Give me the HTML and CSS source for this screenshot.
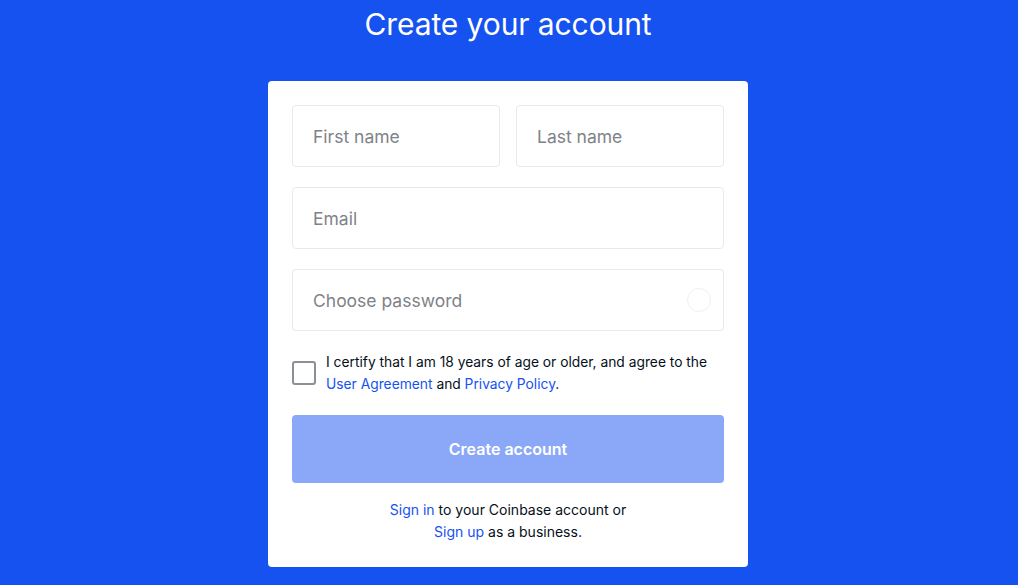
FILE: index.html
```html
<!DOCTYPE html>
<html>
<head>
<meta charset="utf-8">
<link rel="stylesheet" href="styles.css">
</head>
<body>
<main class="page">
  <h1 class="title">Create your account</h1>
  <form class="card">
    <div class="row">
      <div class="field"><span class="ph">First name</span></div>
      <div class="field"><span class="ph">Last name</span></div>
    </div>
    <div class="field"><span class="ph">Email</span></div>
    <div class="field password"><span class="ph">Choose password</span><span class="ring"></span></div>
    <label class="agree">
      <span class="box"></span>
      <span class="agree-text">I certify that I am 18 years of age or older, and agree to the <a href="#">User Agreement</a> and <a href="#">Privacy Policy</a>.</span>
    </label>
    <button type="button" class="submit">Create account</button>
    <p class="footer"><a href="#">Sign in</a> to your Coinbase account or<br><a href="#">Sign up</a> as a business.</p>
  </form>
</main>
</body>
</html>
```
FILE: styles.css
```css
* { box-sizing: border-box; }
html, body { margin: 0; padding: 0; }
body {
  background: #1652f0;
  font-family: Inter, "Noto Sans", sans-serif;
  height: 585px;
  overflow: hidden;
}
.page {
  display: flex;
  flex-direction: column;
  align-items: center;
  padding-top: 6px;
  padding-right: 2px;
}
.title {
  margin: 0;
  color: #fff;
  font-weight: 400;
  font-size: 30px;
  line-height: 36px;
  letter-spacing: -0.1px;
}
.card {
  margin-top: 39px;
  width: 480px;
  background: #fff;
  border-radius: 4px;
  padding: 24px;
  display: flex;
  flex-direction: column;
  gap: 20px;
}
.row {
  display: flex;
  gap: 16px;
}
.row .field { flex: 1; }
.field {
  height: 62px;
  border: 1px solid #e8e9ec;
  border-radius: 4px;
  display: flex;
  align-items: center;
  padding: 0 20px;
}
.ph {
  color: #7f8288;
  font-size: 17.5px;
  flex: 1;
  padding-top: 1px;
}
.ring {
  width: 24px;
  height: 24px;
  border-radius: 50%;
  border: 1px solid #eef0f3;
  margin-right: -8px;
}
.agree {
  display: flex;
  gap: 10px;
  align-items: center;
}
.box {
  flex: none;
  width: 24px;
  height: 24px;
  border: 2px solid #8a8f98;
  border-radius: 3px;
}
.agree-text {
  font-size: 13.8px;
  line-height: 22px;
  color: #050f19;
}
a { color: #1652f0; text-decoration: none; }
.submit {
  margin-top: 0;
  height: 68px;
  border: 0;
  border-radius: 4px;
  background: #8ba8f8;
  color: #fff;
  font-family: inherit;
  font-weight: 600;
  font-size: 16px;
}
.footer {
  margin: -4px 0 0;
  text-align: center;
  font-size: 14px;
  line-height: 22px;
  color: #050f19;
}
```
